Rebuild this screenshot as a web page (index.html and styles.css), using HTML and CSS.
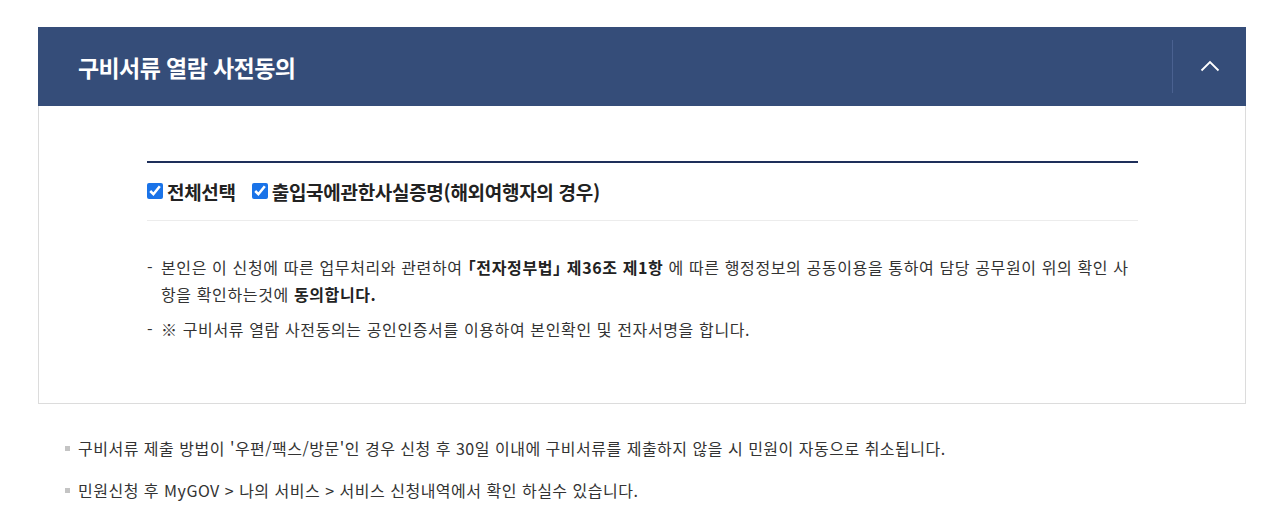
FILE: index.html
```html
<!DOCTYPE html>
<html lang="ko">
<head>
<meta charset="utf-8">
<title>구비서류 열람 사전동의</title>
<link rel="stylesheet" href="styles.css">
</head>
<body>
<section class="panel">
  <div class="panel-head">
    <h2 class="panel-title">구비서류 열람 사전동의</h2>
    <button class="toggle" type="button" aria-label="접기">
      <svg width="20" height="12" viewBox="0 0 20 12"><path d="M1.5 10.5 L10 2 L18.5 10.5" fill="none" stroke="#fff" stroke-width="1.8"/></svg>
    </button>
  </div>
  <div class="panel-body">
    <div class="checks">
      <label class="check"><input type="checkbox" checked><span>전체선택</span></label>
      <label class="check"><input type="checkbox" checked><span>출입국에관한사실증명(해외여행자의 경우)</span></label>
    </div>
    <ul class="agree-list">
      <li>본인은 이 신청에 따른 업무처리와 관련하여 <b><span class="br">「</span>전자정부법<span class="br">」</span> 제36조 제1항</b> 에 따른 행정정보의 공동이용을 통하여 담당 공무원이 위의 확인 사항을 확인하는것에 <b>동의합니다.</b></li>
      <li>※ 구비서류 열람 사전동의는 공인인증서를 이용하여 본인확인 및 전자서명을 합니다.</li>
    </ul>
  </div>
</section>
<ul class="notes">
  <li>구비서류 제출 방법이 '우편/팩스/방문'인 경우 신청 후 30일 이내에 구비서류를 제출하지 않을 시 민원이 자동으로 취소됩니다.</li>
  <li>민원신청 후 MyGOV &gt; 나의 서비스 &gt; 서비스 신청내역에서 확인 하실수 있습니다.</li>
</ul>
</body>
</html>
```
FILE: styles.css
```css
* { box-sizing: border-box; }
body {
  margin: 0;
  padding: 27px 0 0 0;
  background: #fff;
  font-family: "Noto Sans CJK KR", "Noto Sans", sans-serif;
  color: #333;
}
.panel {
  width: 1208px;
  margin-left: 38px;
}
.panel-head {
  height: 79px;
  background: #354d79;
  display: flex;
  align-items: center;
  padding-left: 40px;
}
.panel-title {
  flex: 1;
  margin: 0;
  color: #fff;
  font-size: 23px;
  font-weight: 700;
  letter-spacing: -0.6px;
}
.toggle {
  width: 74px;
  height: 53px;
  border: 0;
  border-left: 1px solid #4a6190;
  background: transparent;
  display: flex;
  align-items: center;
  justify-content: center;
  padding: 0 0 2px 0;
}
.panel-body {
  border: 1px solid #dcdcdc;
  border-top: 0;
  padding: 55px 107px 60px 108px;
}
.checks {
  border-top: 2px solid #1e2f5a;
  border-bottom: 1px solid #ececec;
  height: 60px;
  display: flex;
  align-items: center;
  gap: 16px;
  padding-bottom: 1px;
}
.check {
  display: flex;
  align-items: center;
  font-size: 19px;
  font-weight: 700;
  letter-spacing: -0.3px;
  color: #222;
}
.check input {
  width: 16px;
  height: 16px;
  margin: 0 4px 0 0;
  accent-color: #1a73e8;
}
.agree-list {
  list-style: none;
  margin: 33px 0 0 0;
  padding: 0 0 0 14px;
  font-size: 16px;
  line-height: 27px;
  letter-spacing: 0.62px;
  color: #333;
}
.agree-list li {
  position: relative;
  margin-bottom: 8px;
}
.agree-list li:last-child { margin-bottom: 0; }
.agree-list li::before {
  content: "-";
  position: absolute;
  left: -14px;
  top: 0;
}
.agree-list b { font-weight: 700; color: #222; }
.br { font-feature-settings: "halt"; }
.notes {
  list-style: none;
  margin: 32px 0 0 78px;
  padding: 0;
  font-size: 16px;
  line-height: 24px;
  letter-spacing: 0.5px;
  color: #333;
}
.notes li {
  position: relative;
  margin-bottom: 18px;
}
.notes li::before {
  content: "";
  position: absolute;
  left: -13px;
  top: 10px;
  width: 5px;
  height: 5px;
  background: #c4c4c4;
}
```
